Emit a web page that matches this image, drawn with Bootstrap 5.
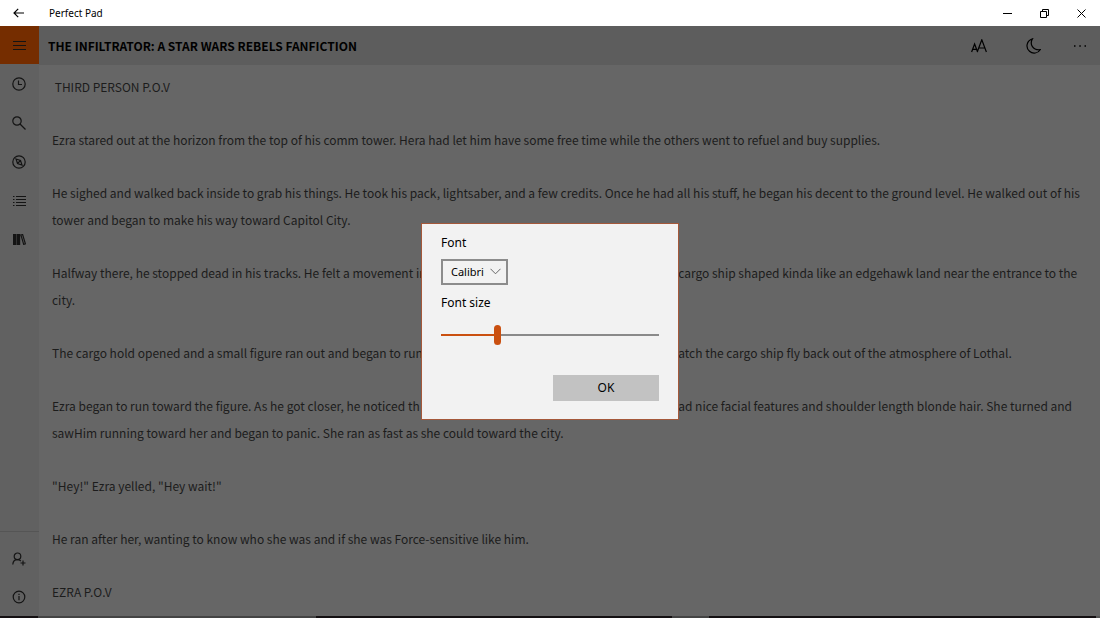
<!DOCTYPE html>
<html lang="en">
<head>
<meta charset="utf-8">
<meta name="viewport" content="width=device-width, initial-scale=1">
<title>Perfect Pad</title>
<link href="https://cdn.jsdelivr.net/npm/bootstrap@5.3.0/dist/css/bootstrap.min.css" rel="stylesheet">
<style>
:root { --accent: #ca5010; --rail: 39px; }
body { font-family: "Noto Sans", sans-serif; font-size: 12px; background: #666; color: #000; overflow: hidden; }
svg { display: block; fill: none; stroke: currentColor; stroke-width: 1.2; }
.icon-btn { background: none; border: 0; padding: 0; color: inherit; display: grid; place-items: center; }
.titlebar { height: 26px; background: #fff; font-size: 10px; }
.titlebar .icon-btn { width: 37px; height: 26px; }
.rail { width: var(--rail); background: #616161; color: #141414; }
.rail .icon-btn { width: 38px; height: 39px; }
.rail .menu-btn { width: var(--rail); height: 38px; background: #752d00; }
.rail-foot { border-top: 1px solid #555; }
.rail-foot .icon-btn { height: 38px; }
.appbar { height: 39px; background: #5d5d5d; padding: 0 1px 0 9px; }
.appbar h1 { font-family: "Noto Sans CJK SC", sans-serif; font-size: 12px; line-height: 20px; font-weight: 700; }
.appbar .icon-btn { width: 54px; height: 39px; }
.appbar .more-btn { width: 39px; }
.story { font-family: "Noto Sans CJK SC", sans-serif; font-size: 12px; line-height: 27px; padding: 8px 13px 0; color: #1c1c1c; white-space: nowrap; }
.story p { margin: 0 0 26px; }
.split-line > :first-child { flex: 0 0 60.5%; }
.taskbar { height: 2px; background: linear-gradient(to right, #141012 3.5%, #444 3.5% 28.7%, #141012 28.7% 61.1%, #444 61.1% 64.5%, #141012 64.5% 99.6%, #555 99.6%); }
.panel { width: 258px; padding: 9px 19px 18px; background: #f2f2f2; border: 1px solid #a4583a; top: 223px; left: 50%; margin-left: -129px; }
.panel label { display: block; line-height: 20px; }
.font-wrap { margin: 6px 0 8px; }
.font-pick { width: 67px; height: 26px; padding: 0 0 0 8px; border: 2px solid #8c8c8c; border-radius: 0; background: none; font-size: 11px; color: #000; appearance: none; }
.pick-arrow { right: 7px; top: 9px; color: #666; stroke-width: 1; pointer-events: none; }
.size-slider { appearance: none; display: block; width: 100%; height: 20px; margin: 12px 0 30px; background: linear-gradient(to right, var(--accent) 26%, #8a8a8a 26%) center / 100% 2px no-repeat; }
.size-slider::-webkit-slider-thumb { appearance: none; width: 7px; height: 20px; border-radius: 4px; background: var(--accent); }
.size-slider::-moz-range-thumb { width: 7px; height: 20px; border: 0; border-radius: 4px; background: var(--accent); }
.ok-btn { width: 106px; height: 26px; padding: 0; border: 0; border-radius: 0; background: #c2c2c2; font-size: 12px; }
</style>
</head>
<body class="vh-100 d-flex flex-column">
<header class="titlebar d-flex align-items-center">
  <button class="icon-btn" aria-label="Back"><svg width="12" height="10" viewBox="0 0 12 10"><path d="M11 5H1M5.200.8 1 5l4.200 4.200"/></svg></button>
  <span class="ms-2 ps-1 me-auto">Perfect Pad</span>
  <button class="icon-btn" aria-label="Minimize"><svg width="9" height="9" viewBox="0 0 9 9"><path d="M0 4.500h9" stroke-width="1"/></svg></button>
  <button class="icon-btn" aria-label="Restore"><svg width="9" height="9" viewBox="0 0 9 9"><path d="M.5 2.500h6v6h-6zM2.500 2.500v-2h6v6h-2" stroke-width="1"/></svg></button>
  <button class="icon-btn" aria-label="Close"><svg width="9" height="9" viewBox="0 0 9 9"><path d="m.5.5 8 8m0-8-8 8" stroke-width="1"/></svg></button>
</header>
<div class="d-flex flex-grow-1 overflow-hidden">
  <nav class="rail d-flex flex-column flex-shrink-0" aria-label="Main">
    <button class="icon-btn menu-btn" aria-label="Menu"><svg width="13" height="9" viewBox="0 0 13 9"><path d="M0 .5h13M0 4.500h13M0 8.500h13" stroke-width="1"/></svg></button>
    <button class="icon-btn" aria-label="Recent"><svg width="14" height="14" viewBox="0 0 14 14"><circle cx="7" cy="7" r="6.200"/><path d="M6.500 3.500v4H10"/></svg></button>
    <button class="icon-btn" aria-label="Search"><svg width="14" height="14" viewBox="0 0 14 14"><circle cx="5" cy="5" r="4.200"/><path d="m8 8 5.500 5.500"/></svg></button>
    <button class="icon-btn" aria-label="Discover"><svg width="14" height="14" viewBox="0 0 14 14"><circle cx="7" cy="7" r="6.200"/><path d="m4 4 4.500 1.500L10 10 5.500 8.500zM5.500 8.500l3-3"/></svg></button>
    <button class="icon-btn" aria-label="Contents"><svg width="13" height="10" viewBox="0 0 13 10"><path d="M0 .5h1.500M3 .5h10M0 3.500h1.500M3 3.500h10M0 6.500h1.500M3 6.500h10M0 9.500h1.500M3 9.500h10" stroke-width="1"/></svg></button>
    <button class="icon-btn" aria-label="Library"><svg width="13" height="11" viewBox="0 0 13 11"><path d="M.6.6h2.200v9.800H.6zM4.400.6h2.200v9.800H4.400zM7.900 1l1.700-.5 2.800 9.400-1.700.5zM1.700 1v9M5.500 1v9"/></svg></button>
    <div class="rail-foot mt-auto d-flex flex-column pt-2">
      <button class="icon-btn" aria-label="Add account"><svg width="14" height="14" viewBox="0 0 14 14"><circle cx="5.500" cy="4.300" r="3.300"/><path d="M.8 12.500c.2-3 2-4.900 4.700-4.900 1.500 0 2.500.5 3.300 1.400M11 8.500v5M8.500 11h5"/></svg></button>
      <button class="icon-btn" aria-label="About"><svg width="14" height="14" viewBox="0 0 14 14"><circle cx="7" cy="7" r="5.800"/><path d="M7 6v4.200M7 3.800v1.300"/></svg></button>
    </div>
  </nav>
  <div class="flex-grow-1 d-flex flex-column overflow-hidden">
    <div class="appbar d-flex align-items-center flex-shrink-0">
      <h1 class="m-0 me-auto">THE INFILTRATOR: A STAR WARS REBELS FANFICTION</h1>
      <button class="icon-btn" aria-label="Font options"><svg width="16" height="14" viewBox="0 0 16 14"><path d="m.6 13 3-8 3 8M1.700 10.300h3.800M6.200 13 10.800.8 15.400 13M7.800 9h6"/></svg></button>
      <button class="icon-btn" aria-label="Night mode"><svg width="15" height="16" viewBox="0 0 15 16"><path d="M6.500.8C.6 2.500-.8 9.500 3.500 13.300c3.500 3 8.400 2 10.700-1.600C7 12.400 3.200 6.500 6.500.8z"/></svg></button>
      <button class="icon-btn more-btn" aria-label="More"><svg width="12" height="2" viewBox="0 0 12 2"><path d="M0 1h1.500M5.300 1h1.500M10.500 1H12" stroke-width="1.500"/></svg></button>
    </div>
    <main class="story">
      <p>&nbsp;THIRD PERSON P.O.V</p>
      <p>Ezra stared out at the horizon from the top of his comm tower. Hera had let him have some free time while the others went to refuel and buy supplies.</p>
      <p>He sighed and walked back inside to grab his things. He took his pack, lightsaber, and a few credits. Once he had all his stuff, he began his decent to the ground level. He walked out of his<br>tower and began to make his way toward Capitol City.</p>
      <p><span class="split-line d-flex"><span>Halfway there, he stopped dead in his tracks. He felt a movement in</span><span>cargo ship shaped kinda like an edgehawk land near the entrance to the</span></span>city.</p>
      <p class="split-line d-flex"><span>The cargo hold opened and a small figure ran out and began to run</span><span>atch the cargo ship fly back out of the atmosphere of Lothal.</span></p>
      <p><span class="split-line d-flex"><span>Ezra began to run toward the figure. As he got closer, he noticed th</span><span>ad nice facial features and shoulder length blonde hair. She turned and</span></span>sawHim running toward her and began to panic. She ran as fast as she could toward the city.</p>
      <p>"Hey!" Ezra yelled, "Hey wait!"</p>
      <p>He ran after her, wanting to know who she was and if she was Force-sensitive like him.</p>
      <p>EZRA P.O.V</p>
    </main>
  </div>
</div>
<footer class="taskbar flex-shrink-0"></footer>
<form class="panel position-absolute" role="dialog" aria-label="Font options">
  <label for="font">Font</label>
  <div class="font-wrap position-relative d-table">
    <select id="font" class="font-pick d-block"><option>Calibri</option></select>
    <svg class="pick-arrow position-absolute" width="11" height="7" viewBox="0 0 11 7"><path d="m.5.8 5 5 5-5"/></svg>
  </div>
  <label for="size">Font size</label>
  <input id="size" class="size-slider" type="range" min="0" max="100" value="25">
  <button type="button" class="ok-btn d-block ms-auto">OK</button>
</form>
<script src="https://cdn.jsdelivr.net/npm/bootstrap@5.3.0/dist/js/bootstrap.bundle.min.js"></script>
</body>
</html>
